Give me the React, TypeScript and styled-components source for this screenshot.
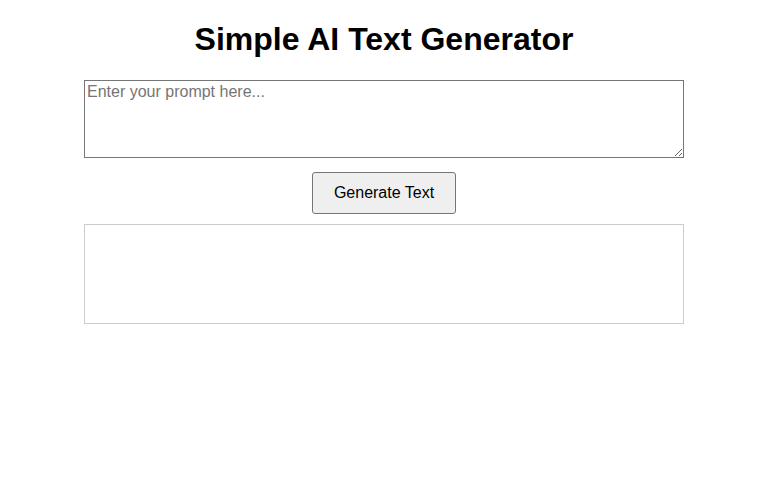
import React, { useState } from "react";
import styled, { createGlobalStyle } from "styled-components";

const GlobalStyle = createGlobalStyle`
  html, body {
    margin: 0;
    padding: 0;
    background: #ffffff;
    font-family: "Liberation Sans", Arial, sans-serif;
  }
`;

const Page = styled.main`
  display: flex;
  flex-direction: column;
  align-items: center;
  padding: 21px 0 20px;
`;

const Title = styled.h1`
  margin: 0 0 22px;
  font-size: 32px;
  font-weight: bold;
  line-height: 37px;
  color: #000000;
`;

const PromptInput = styled.textarea`
  box-sizing: border-box;
  width: 600px;
  height: 78px;
  margin: 0;
  padding: 2px;
  border: 1px solid #767676;
  font-family: "Liberation Sans", Arial, sans-serif;
  font-size: 16px;
  color: #000;
  resize: vertical;

  &::placeholder {
    color: #757575;
  }
`;

const GenerateButton = styled.button`
  box-sizing: border-box;
  margin-top: 14px;
  height: 42px;
  padding: 0 21px;
  border: 1px solid #767676;
  border-radius: 3px;
  background: #efefef;
  font-family: "Liberation Sans", Arial, sans-serif;
  font-size: 16px;
  color: #000;
  cursor: pointer;
`;

const Output = styled.div`
  box-sizing: border-box;
  width: 600px;
  height: 100px;
  margin-top: 10px;
  padding: 10px;
  border: 1px solid #cccccc;
  font-size: 16px;
  white-space: pre-wrap;
`;

export default function App() {
  const [prompt, setPrompt] = useState("");
  const [result, setResult] = useState("");

  return (
    <>
      <GlobalStyle />
      <Page>
        <Title>Simple AI Text Generator</Title>
        <PromptInput
          placeholder="Enter your prompt here..."
          value={prompt}
          onChange={(e) => setPrompt(e.target.value)}
        />
        <GenerateButton onClick={() => setResult(prompt)}>
          Generate Text
        </GenerateButton>
        <Output>{result}</Output>
      </Page>
    </>
  );
}
